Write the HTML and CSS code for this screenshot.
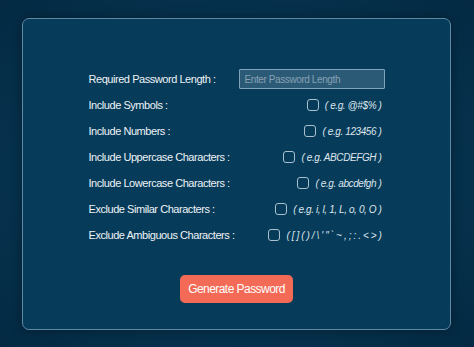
FILE: index.html
```html
<!DOCTYPE html>
<html>
  <head>
    <meta name="viewport" content="width=device-width,initial-scale=1.0" />
    <title>Password Generator</title>
    <link rel="stylesheet" href="styles.css">
  </head>
  <body>
    <div class="card">
      <form class="options" action="">
        <label class="label" for="length">Required Password Length :</label>
        <input class="lengthInput" id="length" placeholder="Enter Password Length" autocomplete="off" />

        <label class="label" for="symbols">Include Symbols :</label>
        <div class="choice">
          <input type="checkbox" id="symbols" class="check" />
          <span class="hint">( e.g. @#$% )</span>
        </div>

        <label class="label" for="numbers">Include Numbers :</label>
        <div class="choice">
          <input type="checkbox" id="numbers" class="check" />
          <span class="hint">( e.g. 123456 )</span>
        </div>

        <label class="label" for="upper">Include Uppercase Characters :</label>
        <div class="choice">
          <input type="checkbox" id="upper" class="check" />
          <span class="hint">( e.g. ABCDEFGH )</span>
        </div>

        <label class="label" for="lower">Include Lowercase Characters :</label>
        <div class="choice">
          <input type="checkbox" id="lower" class="check" />
          <span class="hint">( e.g. abcdefgh )</span>
        </div>

        <label class="label" for="similar">Exclude Similar Characters :</label>
        <div class="choice">
          <input type="checkbox" id="similar" class="check" />
          <span class="hint">( e.g. i, l, 1, L, o, 0, O )</span>
        </div>

        <label class="label" for="ambiguous">Exclude Ambiguous Characters :</label>
        <div class="choice">
          <input type="checkbox" id="ambiguous" class="check" />
          <span class="hint">( [ ] ( ) / \ ' " ` ~ , ; : . &lt; &gt; )</span>
        </div>
      </form>
      <button class="generate" type="button">Generate Password</button>
    </div>
  </body>
</html>
```
FILE: styles.css
```css
html,
body {
  height: 100%;
}

body {
  margin: 0;
  padding: 18px 23px 17px 22px;
  box-sizing: border-box;
  font-family: "Liberation Sans", Arial, Helvetica, sans-serif;
  background: radial-gradient(ellipse at center, #083a58 0%, #06324e 60%, #042a43 100%);
  color: #eef3f6;
}

.card {
  height: 100%;
  box-sizing: border-box;
  border: 1.5px solid #5d89a5;
  border-radius: 7px;
  background: #073b5a;
  box-shadow: 0 0 12px rgba(0, 0, 0, 0.35);
  display: flex;
  flex-direction: column;
  align-items: center;
  padding: 47px 0 25px;
}

.options {
  width: 296px;
  display: grid;
  grid-template-columns: 1fr auto;
  grid-auto-rows: 26px;
  align-items: center;
  margin: 0 0 27px;
}

.label {
  font-size: 11px;
  letter-spacing: -0.45px;
  white-space: nowrap;
  color: #eef3f6;
}

.lengthInput {
  width: 146px;
  height: 20px;
  box-sizing: border-box;
  border: 1px solid #7ea3ba;
  border-radius: 1px;
  background: #2b5a77;
  color: #dfe8ee;
  padding: 0 5px;
  font-family: inherit;
  font-size: 10px;
  letter-spacing: -0.4px;
  outline: none;
}

.lengthInput::placeholder {
  color: #86a1b3;
}

.choice {
  justify-self: end;
  display: flex;
  align-items: center;
  gap: 6px;
  padding-right: 3px;
  white-space: nowrap;
}

.check {
  appearance: none;
  margin: 0;
  width: 12px;
  height: 12px;
  box-sizing: border-box;
  border: 1.5px solid #a8c0cf;
  border-radius: 3px;
  background: transparent;
}

.hint {
  font-size: 10px;
  font-style: italic;
  letter-spacing: -0.4px;
  color: #dce6ec;
}

.generate {
  background: #f36b56;
  border: none;
  border-radius: 5px;
  width: 113px;
  height: 28px;
  padding: 0;
  color: #fff;
  font-family: inherit;
  font-size: 12px;
  letter-spacing: -0.55px;
  cursor: pointer;
}
```
